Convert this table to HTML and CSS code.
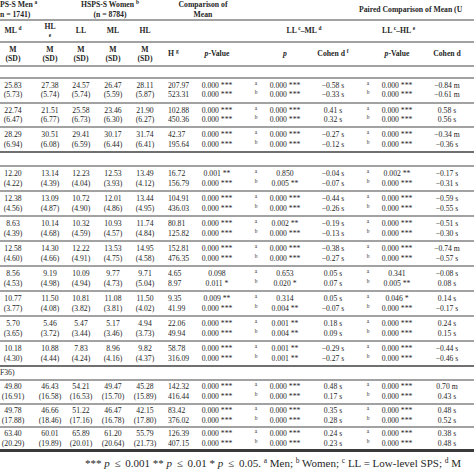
FILE: index.html
```html
<!DOCTYPE html>
<html lang="en">
<head>
<meta charset="utf-8">
<title>Table</title>
<link rel="stylesheet" href="styles.css">
</head>
<body>
<div class="sheet">
  <div class="row r1 hd">
    <div class="g-men">PS-S Men <sup>a</sup><br>n = 1741)</div>
    <div class="g-women">HSPS-S Women <sup>b</sup><br>(n = 8784)</div>
    <div class="g-comp">Comparison of<br>Mean</div>
    <div class="g-paired">Paired Comparison of Mean (U</div>
  </div>
  <div class="row r2 hd">
    <div class="k1">ML <sup>d</sup></div>
    <div class="k2">HL<br><sup>e</sup></div>
    <div class="k3">LL</div>
    <div class="k4">ML</div>
    <div class="k5">HL</div>
    <div class="g-llml">LL <sup>c</sup>–ML <sup>d</sup></div>
    <div class="g-llhl">LL <sup>c</sup>–HL <sup>e</sup></div>
  </div>
  <div class="row r3 hd cells">
    <div>M<br>(SD)</div>
    <div>M<br>(SD)</div>
    <div>M<br>(SD)</div>
    <div>M<br>(SD)</div>
    <div>M<br>(SD)</div>
    <div>H <sup>g</sup></div>
    <div><i>p</i>-Value</div>
    <div></div>
    <div><i>p</i></div>
    <div>Cohen d <sup>f</sup></div>
    <div></div>
    <div><i>p</i>-Value</div>
    <div>Cohen d</div>
  </div>
  <div class="row sec sec-top"></div>

  <section class="grp grp-a">
    <div class="row cells">
      <div>25.83<br>(5.73)</div><div>27.38<br>(5.74)</div><div>24.57<br>(5.74)</div><div>26.47<br>(5.59)</div><div>28.11<br>(5.87)</div>
      <div>207.97<br>523.31</div><div>0.000 ***<br>0.000 ***</div><div class="mk">a<br>b</div>
      <div>0.000 ***<br>0.000 ***</div><div>−0.58 s<br>−0.33 s</div><div class="mk">a<br>b</div>
      <div>0.000 ***<br>0.000 ***</div><div>−0.84 m<br>−0.61 m</div>
    </div>
    <div class="row cells">
      <div>22.74<br>(6.47)</div><div>21.51<br>(6.77)</div><div>25.58<br>(6.73)</div><div>23.46<br>(6.30)</div><div>21.90<br>(6.27)</div>
      <div>102.88<br>450.36</div><div>0.000 ***<br>0.000 ***</div><div class="mk">a<br>b</div>
      <div>0.000 ***<br>0.000 ***</div><div>0.41 s<br>0.32 s</div><div class="mk">a<br>b</div>
      <div>0.000 ***<br>0.000 ***</div><div>0.58 s<br>0.56 s</div>
    </div>
    <div class="row cells end">
      <div>28.29<br>(6.94)</div><div>30.51<br>(6.08)</div><div>29.41<br>(6.59)</div><div>30.17<br>(6.44)</div><div>31.74<br>(6.41)</div>
      <div>42.37<br>195.64</div><div>0.000 ***<br>0.000 ***</div><div class="mk">a<br>b</div>
      <div>0.000 ***<br>0.000 ***</div><div>−0.27 s<br>−0.12 s</div><div class="mk">a<br>b</div>
      <div>0.000 ***<br>0.000 ***</div><div>−0.34 m<br>−0.36 s</div>
    </div>
  </section>

  <div class="row sec sec-mid"></div>

  <section class="grp grp-b">
    <div class="row cells">
      <div>12.20<br>(4.22)</div><div>13.14<br>(4.39)</div><div>12.23<br>(4.04)</div><div>12.53<br>(3.93)</div><div>13.49<br>(4.12)</div>
      <div>16.72<br>156.79</div><div>0.001 **<br>0.000 ***</div><div class="mk">a<br>b</div>
      <div>0.850<br>0.005 **</div><div>−0.04 s<br>−0.07 s</div><div class="mk">a<br>b</div>
      <div>0.002 **<br>0.000 ***</div><div>−0.17 s<br>−0.31 s</div>
    </div>
    <div class="row cells">
      <div>12.38<br>(4.56)</div><div>13.09<br>(4.87)</div><div>10.72<br>(4.90)</div><div>12.01<br>(4.86)</div><div>13.44<br>(4.95)</div>
      <div>104.91<br>436.03</div><div>0.000 ***<br>0.000 ***</div><div class="mk">a<br>b</div>
      <div>0.000 ***<br>0.000 ***</div><div>−0.44 s<br>−0.26 s</div><div class="mk">a<br>b</div>
      <div>0.000 ***<br>0.000 ***</div><div>−0.59 s<br>−0.55 s</div>
    </div>
    <div class="row cells">
      <div>8.63<br>(4.39)</div><div>10.14<br>(4.68)</div><div>10.32<br>(4.59)</div><div>10.93<br>(4.57)</div><div>11.74<br>(4.84)</div>
      <div>80.81<br>125.82</div><div>0.000 ***<br>0.000 ***</div><div class="mk">a<br>b</div>
      <div>0.002 **<br>0.000 ***</div><div>−0.19 s<br>−0.13 s</div><div class="mk">a<br>b</div>
      <div>0.000 ***<br>0.000 ***</div><div>−0.51 s<br>−0.30 s</div>
    </div>
    <div class="row cells">
      <div>12.58<br>(4.60)</div><div>14.30<br>(4.66)</div><div>12.22<br>(4.91)</div><div>13.53<br>(4.75)</div><div>14.95<br>(4.58)</div>
      <div>152.81<br>476.35</div><div>0.000 ***<br>0.000 ***</div><div class="mk">a<br>b</div>
      <div>0.000 ***<br>0.000 ***</div><div>−0.38 s<br>−0.27 s</div><div class="mk">a<br>b</div>
      <div>0.000 ***<br>0.000 ***</div><div>−0.74 m<br>−0.57 s</div>
    </div>
    <div class="row cells">
      <div>8.56<br>(4.53)</div><div>9.19<br>(4.98)</div><div>10.09<br>(4.94)</div><div>9.77<br>(4.73)</div><div>9.71<br>(5.04)</div>
      <div>4.65<br>8.97</div><div>0.098<br>0.011 *</div><div class="mk">a<br>b</div>
      <div>0.653<br>0.020 *</div><div>0.05 s<br>0.07 s</div><div class="mk">a<br>b</div>
      <div>0.341<br>0.005 **</div><div>−0.08 s<br>0.08 s</div>
    </div>
    <div class="row cells">
      <div>10.77<br>(3.77)</div><div>11.50<br>(4.08)</div><div>10.81<br>(3.82)</div><div>11.08<br>(3.81)</div><div>11.50<br>(4.02)</div>
      <div>9.35<br>41.99</div><div>0.009 **<br>0.000 ***</div><div class="mk">a<br>b</div>
      <div>0.314<br>0.004 **</div><div>0.05 s<br>−0.07 s</div><div class="mk">a<br>b</div>
      <div>0.046 *<br>0.000 ***</div><div>0.14 s<br>−0.17 s</div>
    </div>
    <div class="row cells">
      <div>5.70<br>(3.65)</div><div>5.46<br>(3.72)</div><div>5.47<br>(3.44)</div><div>5.17<br>(3.46)</div><div>4.94<br>(3.73)</div>
      <div>22.06<br>49.94</div><div>0.000 ***<br>0.000 ***</div><div class="mk">a<br>b</div>
      <div>0.001 **<br>0.004 **</div><div>0.18 s<br>0.09 s</div><div class="mk">a<br>b</div>
      <div>0.000 ***<br>0.000 ***</div><div>0.24 s<br>0.15 s</div>
    </div>
    <div class="row cells end">
      <div>10.18<br>(4.30)</div><div>10.88<br>(4.44)</div><div>7.83<br>(4.24)</div><div>8.96<br>(4.16)</div><div>9.82<br>(4.37)</div>
      <div>58.78<br>316.09</div><div>0.000 ***<br>0.000 ***</div><div class="mk">a<br>b</div>
      <div>0.001 **<br>0.001 **</div><div>−0.29 s<br>−0.27 s</div><div class="mk">a<br>b</div>
      <div>0.000 ***<br>0.000 ***</div><div>−0.44 s<br>−0.46 s</div>
    </div>
  </section>

  <div class="row sec sec-mid"><div class="sec-label">F36)</div></div>

  <section class="grp grp-c">
    <div class="row cells">
      <div>49.80<br>(16.91)</div><div>46.43<br>(16.58)</div><div>54.21<br>(16.53)</div><div>49.47<br>(15.70)</div><div>45.28<br>(15.89)</div>
      <div>142.32<br>416.44</div><div>0.000 ***<br>0.000 ***</div><div class="mk">a<br>b</div>
      <div>0.000 ***<br>0.000 ***</div><div>0.48 s<br>0.17 s</div><div class="mk">a<br>b</div>
      <div>0.000 ***<br>0.000 ***</div><div>0.70 m<br>0.43 s</div>
    </div>
    <div class="row cells">
      <div>49.78<br>(17.88)</div><div>46.66<br>(18.46)</div><div>51.22<br>(17.16)</div><div>46.47<br>(16.78)</div><div>42.15<br>(17.80)</div>
      <div>83.42<br>376.02</div><div>0.000 ***<br>0.000 ***</div><div class="mk">a<br>b</div>
      <div>0.000 ***<br>0.000 ***</div><div>0.35 s<br>0.28 s</div><div class="mk">a<br>b</div>
      <div>0.000 ***<br>0.000 ***</div><div>0.48 s<br>0.52 s</div>
    </div>
    <div class="row cells last">
      <div>63.40<br>(20.29)</div><div>60.01<br>(19.89)</div><div>65.89<br>(20.01)</div><div>61.20<br>(20.64)</div><div>55.79<br>(21.73)</div>
      <div>126.39<br>407.15</div><div>0.000 ***<br>0.000 ***</div><div class="mk">a<br>b</div>
      <div>0.000 ***<br>0.000 ***</div><div>0.24 s<br>0.23 s</div><div class="mk">a<br>b</div>
      <div>0.000 ***<br>0.000 ***</div><div>0.38 s<br>0.48 s</div>
    </div>
  </section>

  <p class="foot">*** <i>p</i> <span class="rel">≤</span> 0.001 ** <i>p</i> <span class="rel">≤</span> 0.01 * <i>p</i> <span class="rel">≤</span> 0.05. <sup>a</sup> Men; <sup>b</sup> Women; <sup>c</sup> LL = Low-level SPS; <sup>d</sup> M</p>
</div>
</body>
</html>
```

FILE: styles.css
```css
* {
  box-sizing: border-box;
  margin: 0;
  padding: 0;
}

html, body {
  background: #ffffff;
}

body {
  width: 474px;
  height: 474px;
  overflow: hidden;
  font-family: "Liberation Serif", "Times New Roman", serif;
  font-size: 7.7px;
  line-height: 9.5px;
  color: #262626;
}

.sheet {
  width: 474px;
  overflow: hidden;
}

.row {
  display: grid;
  grid-template-columns: 34px 31px 32px 32px 37px 35px 39px 29px 48px 35px 29px 50px 43px;
  grid-template-rows: 100%;
  align-items: center;
  justify-items: start;
  border-bottom: 2px solid #a2a2a2;
  white-space: nowrap;
}

sup {
  font-size: 5.4px;
  line-height: 0;
  vertical-align: 3px;
}

i {
  font-style: italic;
}

.hd {
  font-weight: bold;
}

.r1 > *, .r2 > * {
  grid-row: 1;
}

.r1 { height: 21px; }
.r2 { height: 22px; }
.r3 { height: 24px; }

.g-men {
  grid-column: 1 / 3;
  text-align: left;
}

.g-women {
  grid-column: 3 / 6;
  justify-self: stretch;
  text-align: center;
  padding-right: 11px;
}

.g-comp {
  grid-column: 6 / 8;
  justify-self: stretch;
  text-align: center;
}

.g-paired {
  grid-column: 11 / 14;
  padding-left: 7px;
  text-align: left;
}

.k1, .k2, .k3, .k4, .k5 {
  text-align: center;
  width: 32px;
}
.k1 { grid-column: 1; width: 26px; }
.k2 { grid-column: 2; }
.k3 { grid-column: 3; }
.k4 { grid-column: 4; }
.k5 { grid-column: 5; }

.k2 sup {
  vertical-align: 1px;
}

.g-llml {
  grid-column: 9 / 11;
  justify-self: stretch;
  text-align: center;
  padding-right: 13px;
}

.g-llhl {
  grid-column: 12 / 14;
  padding-left: 1px;
  text-align: left;
}

.cells > * {
  width: 32px;
  text-align: center;
}

.cells > :first-child {
  width: 26px;
}

.cells > :nth-child(6) {
  text-align: left;
  padding-left: 2px;
}

.mk {
  font-size: 5.4px;
  padding-bottom: 4px;
}

.sec {
  display: flex;
  align-items: center;
}
.sec-top { height: 12px; }
.sec-mid { height: 14px; }

.sec-label {
  font-size: 7.7px;
}

.grp-a .row { height: 24.7px; }
.grp-b .row { height: 25px; }
.grp-c .row { height: 23.7px; }

.row.end {
  border-bottom-color: #707070;
}

.row.last {
  border-bottom: 3px solid #3a3a3a;
}

.foot {
  height: 22px;
  line-height: 22px;
  padding-left: 85px;
  font-size: 11px;
  white-space: nowrap;
  color: #262626;
}

.foot sup {
  font-size: 7.5px;
  vertical-align: 4px;
}

.foot .rel {
  margin: 0 2px;
}
```
